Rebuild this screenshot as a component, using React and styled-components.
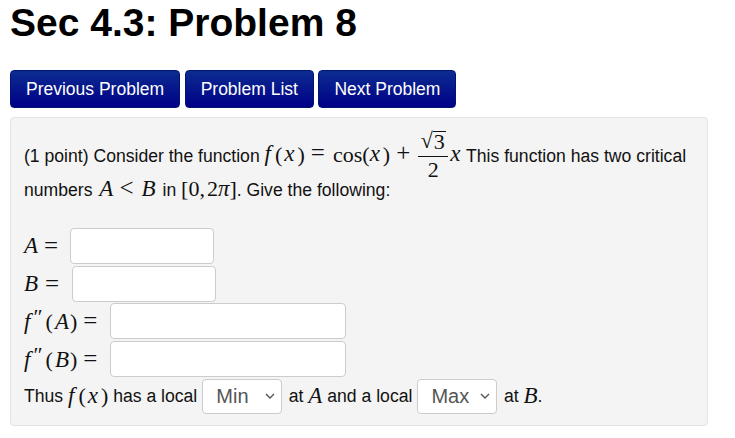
import React from 'react';
import styled, { createGlobalStyle } from 'styled-components';

const GlobalStyle = createGlobalStyle`
  body {
    margin: 0;
    background: #fff;
    color: #000;
    font-family: "Liberation Sans", Arial, sans-serif;
  }
`;

const Page = styled.div`
  width: 698px;
  padding: 3px 10px;
`;

const Title = styled.h1`
  margin: 0;
  font-size: 39px;
  line-height: 40px;
  font-weight: bold;
`;

const Nav = styled.div`
  display: flex;
  gap: 4.5px;
  margin-top: 27px;
`;

const NavButton = styled.button`
  height: 38px;
  padding: 0 15px;
  font: 17.5px "Liberation Sans", Arial, sans-serif;
  color: #fff;
  background: linear-gradient(#0c2c90, #000088);
  border: 1px solid #00166e;
  border-radius: 4px;
  cursor: pointer;
`;

const Well = styled.div`
  margin-top: 9px;
  height: 309px;
  box-sizing: border-box;
  background: #f4f4f4;
  border: 1px solid #e3e3e3;
  border-radius: 4px;
  padding: 12.5px 13px;
  font-size: 17.6px;
  color: #111;
`;

const Line = styled.div`
  white-space: nowrap;
  line-height: 20px;
  margin-top: ${p => p.$mt || 0}px;
`;

const Mi = styled.span`
  font-family: "Liberation Serif", "Times New Roman", serif;
  font-style: italic;
  font-size: 23px;
  margin-left: ${p => p.$l || 0}px;
  margin-right: ${p => p.$r || 0}px;
`;

const Mo = styled.span`
  font-family: "Liberation Serif", "Times New Roman", serif;
  font-size: ${p => p.$size || 22}px;
  margin-left: ${p => p.$l || 0}px;
  margin-right: ${p => p.$r || 0}px;
`;

const Frac = styled.span`
  display: inline-flex;
  flex-direction: column;
  align-items: center;
  vertical-align: 13.5px;
  width: 30px;
  font-family: "Liberation Serif", "Times New Roman", serif;
  font-size: 22px;
  line-height: 20px;
`;

const Numer = styled.span`
  display: flex;
  align-items: flex-end;
  margin-bottom: 5px;
`;

const Denom = styled.span`
  margin-top: 3px;
`;

const Bar = styled.span`
  align-self: stretch;
  height: 1px;
  background: #111;
`;

const Radicand = styled.span`
  border-top: 1.2px solid #111;
  line-height: 19px;
  padding: 0 1px;
`;

const Rows = styled.div`
  display: flex;
  flex-direction: column;
  margin-top: 28px;
`;

const Row = styled.div`
  display: flex;
  align-items: center;
  height: 37.5px;
  white-space: pre;
`;

const Field = styled.input`
  width: ${p => p.$w}px;
  height: 36px;
  box-sizing: border-box;
  margin-left: 8px;
  border: 1px solid #ccc;
  border-radius: 4px;
  background: #fff;
  font-size: 16px;
`;

const Select = styled.span`
  display: inline-flex;
  align-items: center;
  justify-content: space-between;
  width: 80px;
  height: 35px;
  box-sizing: border-box;
  margin-left: 5px;
  margin-right: 6.5px;
  padding: 0 6px 0 13px;
  border: 1px solid #ccc;
  border-radius: 4px;
  background: #fff;
  font-size: 20px;
  color: #555;
`;

const Chevron = () => (
  <svg width="10" height="6" viewBox="0 0 10 6">
    <path d="M1 1 L5 5 L9 1" fill="none" stroke="#555" strokeWidth="1.4" />
  </svg>
);

const Prime = styled.span`
  font-family: "Liberation Serif", serif;
  font-size: 22px;
  position: relative;
  top: -5px;
  margin-left: 3px;
  margin-right: 3px;
`;

const Fpp = ({ v }) => (
  <span>
    <Mi>f</Mi><Prime>″</Prime><Mo>(</Mo><Mi $l={2}>{v}</Mi><Mo $l={1}>)</Mo><Mo $size={25} $l={6} $r={5}>=</Mo>
  </span>
);

const Dropdown = ({ value }) => (
  <Select>
    {value}
    <Chevron />
  </Select>
);

export default function App() {
  return (
    <Page>
      <GlobalStyle />
      <Title>Sec 4.3: Problem 8</Title>
      <Nav>
        <NavButton>Previous Problem</NavButton>
        <NavButton>Problem List</NavButton>
        <NavButton>Next Problem</NavButton>
      </Nav>
      <Well>
        <Line>
          (1 point) Consider the function <Mi $r={4}>f</Mi><Mo>(</Mo><Mi $l={2} $r={3}>x</Mi><Mo>)</Mo>
          <Mo $size={25} $l={6} $r={8}>=</Mo><Mo>cos(</Mo><Mi $r={3}>x</Mi><Mo>)</Mo><Mo $size={25} $l={6} $r={8}>+</Mo>
          <Frac>
            <Numer>√<Radicand>3</Radicand></Numer>
            <Bar />
            <Denom>2</Denom>
          </Frac>
          <Mi $l={2} $r={1}>x</Mi> This function has two critical
        </Line>
        <Line $mt={-2}>
          numbers <Mi $l={2} $r={1}>A</Mi><Mo $size={25} $l={5} $r={8}>&lt;</Mo><Mi $r={2}>B</Mi> in <Mo>[</Mo><Mo $r={2}>0,</Mo><Mo>2</Mo><Mi>π</Mi><Mo>]</Mo>. Give the following:
        </Line>
        <Rows>
          <Row>
            <Mi>A</Mi><Mo $size={25} $l={6} $r={4}>=</Mo>
            <Field $w={144} />
          </Row>
          <Row>
            <Mi $r={1}>B</Mi><Mo $size={25} $l={6} $r={5}>=</Mo>
            <Field $w={144} />
          </Row>
          <Row>
            <Fpp v="A" />
            <Field $w={236} />
          </Row>
          <Row>
            <Fpp v="B" />
            <Field $w={236} />
          </Row>
          <Row>
            Thus <Mi $r={4}>f</Mi><Mo>(</Mo><Mi $l={2} $r={3}>x</Mi><Mo>)</Mo> has a local
            <Dropdown value="Min" />
            at <Mi>A</Mi> and a local
            <Dropdown value="Max" />
            at <Mi>B</Mi>.
          </Row>
        </Rows>
      </Well>
    </Page>
  );
}
